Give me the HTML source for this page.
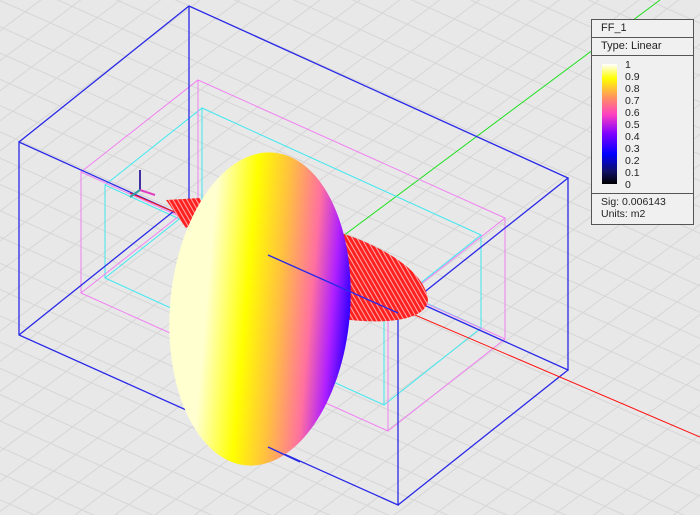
<!DOCTYPE html>
<html><head><style>
html,body{margin:0;padding:0;width:700px;height:515px;overflow:hidden;background:#e8e8e8;font-family:"Liberation Sans",sans-serif;}
#lg{position:absolute;left:591px;top:19px;width:101px;height:204px;background:#f0f0f0;border:1px solid #555;font-size:11px;color:#222;}
#lg .r{border-bottom:1px solid #555;height:17px;line-height:17px;padding-left:9px;}
.n{position:absolute;left:33px;font-size:10.5px;line-height:11px;}
</style></head><body>
<svg width="700" height="515" style="position:absolute;left:0;top:0">
<defs>
<pattern id="g1" width="2000" height="24" patternUnits="userSpaceOnUse" patternTransform="rotate(24)"><line x1="0" y1="0.5" x2="2000" y2="0.5" stroke="#d6d6d6" stroke-width="1"/></pattern>
<pattern id="g2" width="2000" height="24" patternUnits="userSpaceOnUse" patternTransform="rotate(-37)"><line x1="0" y1="0.5" x2="2000" y2="0.5" stroke="#d6d6d6" stroke-width="1"/></pattern>
<linearGradient id="eg" x1="0" y1="0" x2="1" y2="0">
<stop offset="0" stop-color="#ffffd0"/><stop offset="0.2" stop-color="#ffffd0"/><stop offset="0.42" stop-color="#ffff00"/><stop offset="0.6" stop-color="#ffc040"/><stop offset="0.78" stop-color="#ff70a0"/><stop offset="0.9" stop-color="#b020ff"/><stop offset="1" stop-color="#3000ff"/></linearGradient>
<pattern id="mesh" width="4" height="4" patternUnits="userSpaceOnUse" patternTransform="rotate(60)"><rect width="4" height="4" fill="#ff2020"/><line x1="0" y1="2" x2="4" y2="2" stroke="#ffd0d0" stroke-width="0.8"/></pattern>
</defs>
<rect width="700" height="515" fill="#e8e8e8"/>
<rect width="700" height="515" fill="url(#g1)"/>
<rect width="700" height="515" fill="url(#g2)"/>
<g fill="none" stroke-width="1">
<line x1="300" y1="268" x2="660" y2="0" stroke="#20e020"/>
<g stroke="#40e8f0">
<polyline points="105,185 202,108 481,235 384,312 105,185 105,278 384,405 384,312"/>
<polyline points="202,108 202,201 481,328 481,235"/>
<line x1="202" y1="201" x2="105" y2="278"/><line x1="481" y1="328" x2="384" y2="405"/>
</g>
<g stroke="#f080f0">
<polyline points="81,172 198,80 505,218 388,310 81,172 81,293 388,431 388,310"/>
<polyline points="198,80 198,201 505,339 505,218"/>
<line x1="198" y1="201" x2="81" y2="293"/><line x1="505" y1="339" x2="388" y2="431"/>
</g>
<g stroke="#2828e8" stroke-width="1.3">
<polyline points="19,142 189,6 568,178 398,313 19,142 19,335 398,505 398,313"/>
<polyline points="189,6 189,199 568,370 568,178"/>
<line x1="189" y1="199" x2="19" y2="335"/><line x1="568" y1="370" x2="398" y2="505"/>
</g>
<line x1="130" y1="193" x2="700" y2="437" stroke="#ff1010"/>
</g>
<polygon points="166,200 200,198 205,214 186,228" fill="url(#mesh)"/>
<path d="M338,232 C380,245 425,270 428,300 C426,322 380,325 335,318 Z" fill="url(#mesh)"/>
<ellipse cx="260" cy="309" rx="90" ry="157" transform="rotate(5 260 309)" fill="url(#eg)"/>
<line x1="268" y1="255" x2="398" y2="313" stroke="#2828e8" stroke-width="1.3"/>
<line x1="268" y1="447" x2="300" y2="462" stroke="#2828e8" stroke-width="1.3"/>
<g stroke-width="2">
<line x1="140" y1="190" x2="140" y2="170" stroke="#4030a0"/>
<line x1="140" y1="190" x2="155" y2="195" stroke="#e040c0"/>
<line x1="140" y1="190" x2="130" y2="197" stroke="#30a0a0"/>
</g>
</svg>
<div id="lg">
<div class="r">FF_1</div>
<div class="r">Type: Linear</div>
<div style="position:absolute;left:0;top:36px;width:101px;height:137px;border-bottom:1px solid #555;">
<div style="position:absolute;left:10px;top:8px;width:15px;height:120px;background:linear-gradient(to top,#000 0%,#101060 10%,#0000ff 25%,#8000ff 42%,#ff40c0 58%,#ff9060 72%,#ffff00 88%,#ffffff 100%);"></div>
<div class="n" style="top:4px">1</div><div class="n" style="top:16px">0.9</div><div class="n" style="top:28px">0.8</div><div class="n" style="top:40px">0.7</div><div class="n" style="top:52px">0.6</div><div class="n" style="top:64px">0.5</div><div class="n" style="top:76px">0.4</div><div class="n" style="top:88px">0.3</div><div class="n" style="top:100px">0.2</div><div class="n" style="top:112px">0.1</div><div class="n" style="top:124px">0</div>
</div>
<div style="position:absolute;left:9px;top:176px;line-height:12px;font-size:10.5px">Sig: 0.006143<br>Units: m2</div>
</div>
</body></html>
